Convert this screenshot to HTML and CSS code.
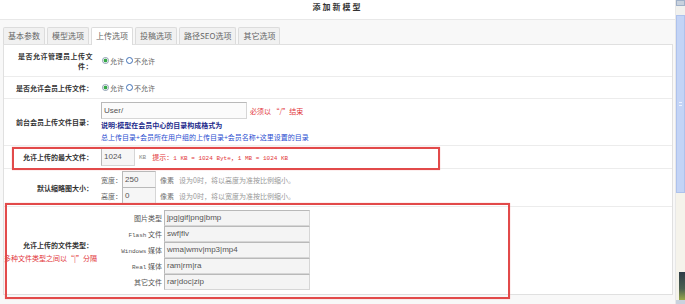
FILE: index.html
```html
<!DOCTYPE html>
<html lang="zh-CN">
<head>
<meta charset="utf-8">
<title>添加新模型</title>
<link rel="stylesheet" href="styles.css">
</head>
<body>
<div class="page">
  <div class="main">
    <h1 class="title">添加新模型</h1>
    <div class="panel">
      <ul class="tabs">
        <li class="tab">基本参数</li>
        <li class="tab">模型选项</li>
        <li class="tab active">上传选项</li>
        <li class="tab">投稿选项</li>
        <li class="tab">路径SEO选项</li>
        <li class="tab">其它选项</li>
      </ul>
      <div class="box">
        <div class="row r1">
          <div class="lbl">是否允许管理员上传文件：</div>
          <div class="val"><span class="radio on"></span><span class="opt">允许</span><span class="radio"></span><span class="opt">不允许</span></div>
        </div>
        <div class="row r2">
          <div class="lbl">是否允许会员上传文件：</div>
          <div class="val"><span class="radio on"></span><span class="opt">允许</span><span class="radio"></span><span class="opt">不允许</span></div>
        </div>
        <div class="row r3">
          <div class="lbl">前台会员上传文件目录：</div>
          <div class="val stack">
            <div class="line"><span class="input wide">User/</span><span class="red">必须以 “/”结束</span></div>
            <div class="note-b">说明:模型在会员中心的目录构成格式为</div>
            <div class="note-blue">总上传目录+会员所在用户组的上传目录+会员名称+这里设置的目录</div>
          </div>
        </div>
        <div class="row r4">
          <div class="lbl">允许上传的最大文件：</div>
          <div class="val"><span class="input small">1024</span><span class="unit mono">KB</span><span class="red hint">提示：<span class="mono">1 KB = 1024 Byte</span>，<span class="mono">1 MB = 1024 KB</span></span></div>
        </div>
        <div class="row r5">
          <div class="lbl">默认缩略图大小：</div>
          <div class="val stack">
            <div class="line"><span class="dim">宽度：</span><span class="input thumb">250</span><span class="px">像素</span><span class="gray">设为0时，将以高度为准按比例缩小。</span></div>
            <div class="line"><span class="dim">高度：</span><span class="input thumb">0</span><span class="px">像素</span><span class="gray">设为0时，将以宽度为准按比例缩小。</span></div>
          </div>
        </div>
        <div class="row r6">
          <div class="lbl">允许上传的文件类型：<div class="red sep">多种文件类型之间以“|”分隔</div></div>
          <div class="val">
            <div class="types">
              <span class="tl">图片类型</span><span class="input type">jpg|gif|png|bmp</span>
              <span class="tl"><span class="mono">Flash</span> 文件</span><span class="input type">swf|flv</span>
              <span class="tl"><span class="mono">Windows</span> 媒体</span><span class="input type">wma|wmv|mp3|mp4</span>
              <span class="tl"><span class="mono">Real</span> 媒体</span><span class="input type">ram|rm|ra</span>
              <span class="tl">其它文件</span><span class="input type">rar|doc|zip</span>
            </div>
          </div>
        </div>
      </div>
    </div>
  </div>
  <div class="scrollbar">
    <div class="sb-up"></div>
    <div class="sb-gap"></div>
    <div class="sb-thumb"><span class="grip"></span></div>
    <div class="sb-track"></div>
    <div class="sb-widget"></div>
    <div class="sb-down"></div>
  </div>
  <div class="mark m1"></div>
  <div class="mark m2"></div>
</div>
</body>
</html>
```
FILE: styles.css
```css
* { box-sizing: border-box; margin: 0; padding: 0; }
html, body { width: 685px; height: 304px; overflow: hidden; }
body {
  font-family: "Noto Sans CJK SC", sans-serif;
  font-size: 7px;
  color: #333;
  background: #fff;
}
.page { position: relative; display: flex; height: 304px; }
.main { width: 675px; display: flex; flex-direction: column; }
.title {
  height: 20px;
  border-bottom: 1px solid #e8e8e8;
  text-align: center;
  font-size: 8px;
  font-weight: bold;
  line-height: 14px;
  letter-spacing: 2px;
  color: #333;
}
.panel { flex: 1; background: #f8f8f8; padding: 7px 0 0 3px; }
.tabs { display: flex; gap: 2px; list-style: none; height: 17px; }
.tab {
  height: 17px;
  padding: 0 4px;
  border: 1px solid #dcdcdc;
  border-bottom: none;
  border-radius: 2px 2px 0 0;
  background: #f1f1f1;
  font-size: 8px;
  line-height: 15px;
  color: #666;
}
.tab.active { background: #fff; height: 18px; margin-bottom: -1px; position: relative; z-index: 1; }
.box {
  width: 670px;
  height: 251px;
  background: #fff;
  border: 1px solid #e0e0e0;
}
.row {
  display: grid;
  grid-template-columns: 92px 1fr;
  border-bottom: 1px solid #ececec;
}
.r1 { height: 32px; }
.r2 { height: 22px; }
.r3 { height: 47px; }
.r4 { height: 23px; }
.r5 { height: 38px; }
.r6 { height: 86px; border-bottom: none; }
.lbl {
  align-self: center;
  text-align: right;
  padding-right: 3px;
  font-weight: bold;
  line-height: 10px;
  color: #333;
}
.r1 .lbl { padding-left: 12px; letter-spacing: 0.5px; }
.val { display: flex; align-items: center; padding-left: 5px; }
.val.stack { flex-direction: column; align-items: flex-start; justify-content: center; }
.line { display: flex; align-items: center; }
.radio {
  display: inline-block;
  width: 7px; height: 7px;
  border-radius: 50%;
  border: 1px solid #3f6fb5;
  background: #fff;
  margin-left: 1px;
}
.radio.on {
  border-color: #8a9cb0;
  background: radial-gradient(circle, #36a848 0 1.6px, #fff 2.2px);
}
.opt { color: #666; margin: 0 1px 0 1px; }
.input {
  display: inline-block;
  border: 1px solid #b9b9b9;
  border-right-color: #d6d6d6;
  border-bottom-color: #d6d6d6;
  background: #f6f6f6;
  font-family: "Liberation Sans", Arial, sans-serif;
  font-size: 8px;
  color: #555;
  padding-left: 2px;
}
.input.wide { width: 146px; height: 17px; line-height: 15px; background: #fbfbfb; }
.input.small { width: 34px; height: 18px; line-height: 16px; }
.input.thumb { width: 34px; height: 17px; line-height: 15px; }
.r5 .line + .line .input { margin-top: -1px; }
.red { color: #e2363a; }
.r3 .red { margin-left: 3px; }
.note-b { color: #1c2a8c; font-weight: bold; line-height: 10px; margin-top: 1px; }
.note-blue { color: #2a4ed0; line-height: 10px; margin-top: 2px; }
.mono { font-family: "Liberation Mono", "Noto Sans CJK SC", monospace; font-size: 6px; }
.unit { color: #888; margin-left: 4px; }
.hint { margin-left: 6px; }
.dim { color: #666; width: 21px; }
.px { color: #777; margin-left: 4px; }
.gray { color: #999; margin-left: 5px; }
.r6 .lbl { padding-top: 2px; }
.sep { font-weight: normal; margin-right: -4px; margin-top: 3px; }
.types {
  display: grid;
  grid-template-columns: 63px 146px;
  grid-auto-rows: 16px;
  align-items: center;
  margin-left: 0;
}
.tl { text-align: right; padding-right: 2px; color: #555; }
.input.type { height: 16px; line-height: 14px; background: #f4f4f4; }
.scrollbar { width: 10px; display: flex; flex-direction: column; background: #f4f2ea; border-left: 1px solid #e8e8e8; }
.sb-up { height: 6px; background: #c9d2de; border: 1px solid #9fb0c8; }
.sb-gap { height: 9px; background: #f1f1ee; }
.sb-thumb { height: 178px; background: #c3d4f6; border: 1px solid #aec2ec; display: flex; align-items: center; justify-content: center; }
.grip { width: 3px; height: 4px; border-top: 1px solid #eef3ff; border-bottom: 1px solid #eef3ff; }
.sb-track { flex: 1; background: #f5f3eb; }
.sb-widget { height: 28px; background: linear-gradient(#2f3d48, #4b6050 60%, #9aa84a); margin-left: 3px; }
.sb-down { height: 4px; background: #c9d2de; }
.mark {
  position: absolute;
  border: 2px solid #e24a4a;
  box-shadow: 0 0 1px #f0a0a0;
  pointer-events: none;
}
.m1 { left: 12px; top: 147px; width: 428px; height: 23px; }
.m2 { left: 5px; top: 203px; width: 505px; height: 96px; }
```
